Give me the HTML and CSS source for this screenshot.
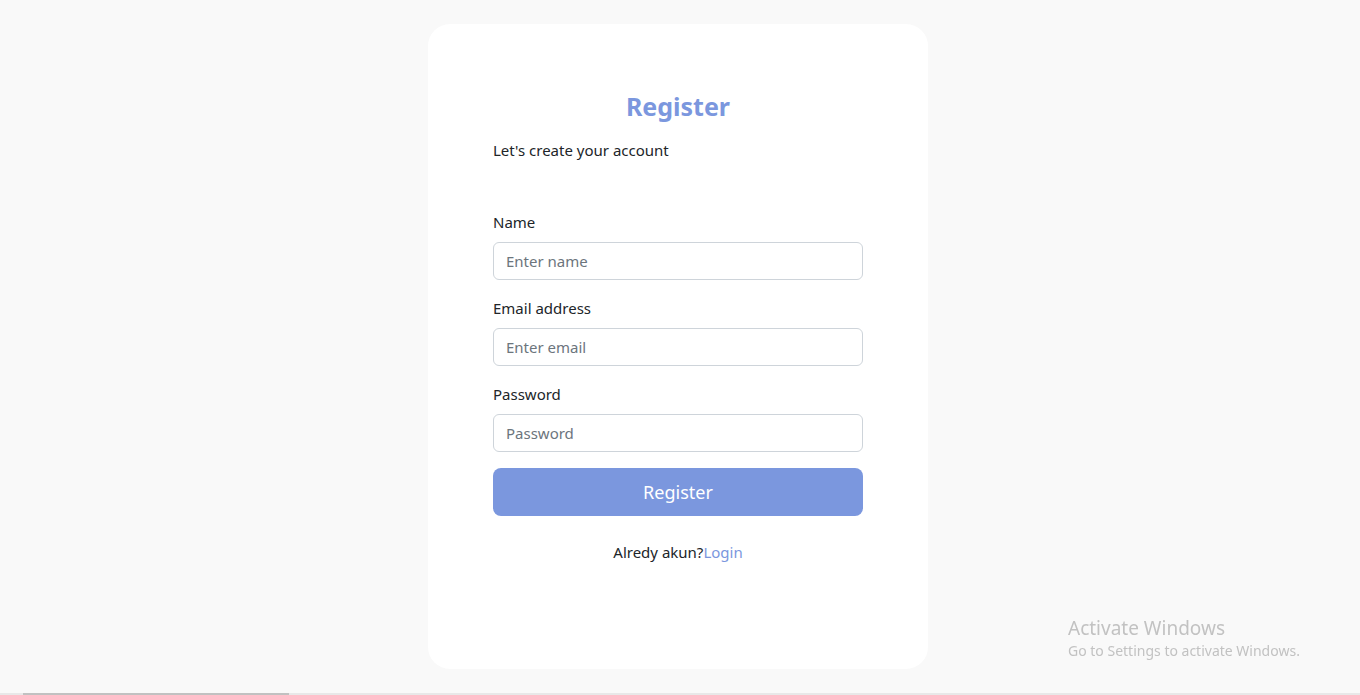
FILE: index.html
```html
<!DOCTYPE html>
<html lang="en">
  <head>
    <meta charset="UTF-8" />
    <meta name="viewport" content="width=device-width, initial-scale=1.0" />
    <title>Register</title>
    <link rel="stylesheet" href="styles.css">
  </head>
  <body>
    <div class="card">
      <h2>Register</h2>
      <p class="subtitle">Let's create your account</p>

      <form class="form">
        <div class="field">
          <label for="name">Name</label>
          <input type="text" id="name" placeholder="Enter name" />
        </div>

        <div class="field">
          <label for="email">Email address</label>
          <input type="email" id="email" placeholder="Enter email" />
        </div>

        <div class="field">
          <label for="password">Password</label>
          <input type="password" id="password" placeholder="Password" />
        </div>

        <button type="button" class="btn">Register</button>
      </form>

      <p class="switch">Alredy akun?<a href="#">Login</a></p>
    </div>

    <div class="watermark">
      <div class="wm-title">Activate Windows</div>
      <div class="wm-sub">Go to Settings to activate Windows.</div>
    </div>
    <div class="scrollbar"><div class="thumb"></div></div>
  </body>
</html>
```

FILE: styles.css
```css
* {
  box-sizing: border-box;
}

body {
  margin: 0;
  font-family: "Noto Sans", "Open Sans", sans-serif;
  background: #f9f9f9;
  color: #212529;
  display: flex;
  justify-content: center;
  padding: 24px 4px 0 0;
  min-height: 100vh;
}

.card {
  background: #fff;
  border-radius: 22px;
  width: 500px;
  height: 645px;
  padding: 65px 65px 0;
}

h2 {
  margin: 0;
  text-align: center;
  color: #7b97de;
  font-size: 25px;
  font-weight: 700;
  line-height: 34px;
}

.subtitle {
  margin: 15px 0 0;
  font-size: 15px;
  line-height: 24px;
}

.form {
  margin-top: 48px;
  display: flex;
  flex-direction: column;
  gap: 16px;
}

.field {
  display: flex;
  flex-direction: column;
}

label {
  font-size: 15px;
  line-height: 24px;
  margin-bottom: 8px;
}

input {
  height: 38px;
  border: 1px solid #ced4da;
  border-radius: 6px;
  padding: 0 12px;
  font-family: inherit;
  font-size: 15px;
  color: #212529;
  outline: none;
}

input::placeholder {
  color: #6c757d;
}

.btn {
  height: 48px;
  border: none;
  border-radius: 8px;
  background: #7b97de;
  color: #fff;
  font-family: inherit;
  font-size: 18px;
}

.switch {
  margin: 24px 0 0;
  text-align: center;
  font-size: 15px;
  line-height: 24px;
}

.switch a {
  color: #7b97de;
  text-decoration: none;
}

.watermark {
  position: fixed;
  left: 1068px;
  top: 615px;
  color: #c2c2c2;
}

.wm-title {
  font-size: 19px;
  line-height: 26px;
}

.wm-sub {
  font-size: 14px;
  line-height: 20px;
}

.scrollbar {
  position: fixed;
  left: 0;
  right: 0;
  bottom: 0;
  height: 2px;
  background: #e8e8e8;
}

.thumb {
  margin-left: 23px;
  width: 266px;
  height: 2px;
  background: #c1c1c1;
}
```
